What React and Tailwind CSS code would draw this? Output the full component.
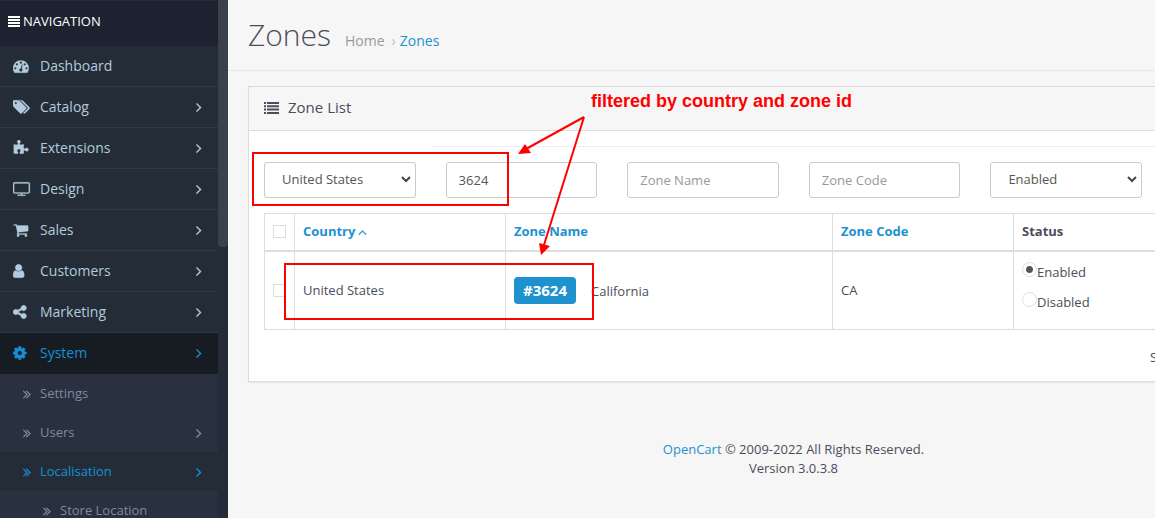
const ICONS = {
  dashboard: 'M384 1152q0-53-37.5-90.5t-90.5-37.5-90.5 37.5-37.5 90.5 37.5 90.5 90.5 37.5 90.5-37.5 37.5-90.5zm192-448q0-53-37.5-90.5t-90.5-37.5-90.5 37.5-37.5 90.5 37.5 90.5 90.5 37.5 90.5-37.5 37.5-90.5zm428 481l101-382q6-26-7.5-48.5t-38.5-29.5-48 6.5-30 39.5l-101 382q-60 5-107 43.5t-63 98.5q-20 77 20 146t117 89 146-20 89-117q16-60-6-117t-72-91zm660-33q0-53-37.5-90.5t-90.5-37.5-90.5 37.5-37.5 90.5 37.5 90.5 90.5 37.5 90.5-37.5 37.5-90.5zm-640-640q0-53-37.5-90.5t-90.5-37.5-90.5 37.5-37.5 90.5 37.5 90.5 90.5 37.5 90.5-37.5 37.5-90.5zm448 192q0-53-37.5-90.5t-90.5-37.5-90.5 37.5-37.5 90.5 37.5 90.5 90.5 37.5 90.5-37.5 37.5-90.5zm320 448q0 261-141 483-19 29-54 29h-1402q-35 0-54-29-141-221-141-483 0-182 71-348t191-286 286-191 348-71 348 71 286 191 191 286 71 348z',
  tags: 'M448 448q0-53-37.5-90.5t-90.5-37.5-90.5 37.5-37.5 90.5 37.5 90.5 90.5 37.5 90.5-37.5 37.5-90.5zm1067 576q0 53-37 90l-491 492q-39 37-91 37-53 0-90-37l-715-716q-38-37-64.5-101t-26.5-117v-416q0-52 38-90t90-38h416q53 0 117 26.5t102 64.5l715 714q37 39 37 91zm384 0q0 53-37 90l-491 492q-39 37-91 37-36 0-59-14t-53-45l470-470q37-37 37-90 0-52-37-91l-715-714q-38-38-102-64.5t-117-26.5h224q53 0 117 26.5t102 64.5l715 714q37 39 37 91z',
  puzzle: 'M1755 1082q0 81-44.5 135t-123.5 54q-41 0-77.5-17.5t-59-38-56.5-38-71-17.5q-110 0-110 124 0 39 16 115t15 115v5q-22 0-33 1-34 3-97.5 11.5t-115.5 13.5-98 5q-61 0-103-26.5t-42-83.5q0-37 17.5-71t38-56.5 38-59 17.5-77.5q0-79-54-123.5t-135-44.5q-84 0-143 45.5t-59 127.5q0 43 15 83t33.5 64.5 33.5 53 15 50.5q0 45-46 89-37 35-117 35-95 0-245-24-9-2-27.5-4t-27.5-4l-13-2q-1 0-3-1-2 0-2-1v-1024q2 1 17.5 3.5t34 5 21.5 3.5q150 24 245 24 80 0 117-35 46-44 46-89 0-22-15-50.5t-33.5-53-33.5-64.5-15-83q0-82 59-127.5t144-45.5q80 0 134 44.5t54 123.5q0 41-17.5 77.5t-38 59-38 56.5-17.5 71q0 57 42 83.5t103 26.5q64 0 180-15t163-17v2q-1 2-3.5 17.5t-5 34-3.5 21.5q-24 150-24 245 0 80 35 117 44 46 89 46 22 0 50.5-15t53-33.5 64.5-33.5 83-15q82 0 127.5 59t45.5 143z',
  tv: 'M1792 1248v-960q0-32-32-32h-1600q-32 0-32 32v960q0 32 32 32h1600q32 0 32-32zm128-960v960q0 66-47 113t-113 47h-736v128h352q32 0 32 32v64q0 32-32 32h-832q-32 0-32-32v-64q0-32 32-32h352v-128h-736q-66 0-113-47t-47-113v-960q0-66 47-113t113-47h1600q66 0 113 47t47 113z',
  cart: 'M704 1536q0 52-38 90t-90 38-90-38-38-90 38-90 90-38 90 38 38 90zm896 0q0 52-38 90t-90 38-90-38-38-90 38-90 90-38 90 38 38 90zm128-1088v512q0 24-16.5 42.5t-40.5 21.5l-1044 122q13 60 13 70 0 16-24 64h920q26 0 45 19t19 45-19 45-45 19h-1024q-26 0-45-19t-19-45q0-11 8-31.5t16-36 21.5-40 15.5-29.5l-177-823h-204q-26 0-45-19t-19-45 19-45 45-19h256q16 0 28.5 6.5t19.5 15.5 13 24.5 8 26 5.5 29.5 4.5 26h1201q26 0 45 19t19 45z',
  user: 'M1280 1399q0 109-62.5 187t-150.5 78h-854q-88 0-150.5-78t-62.5-187q0-85 8.5-160.5t31.5-152 58.5-131 94-89 134.5-34.5q131 128 313 128t313-128q76 0 134.5 34.5t94 89 58.5 131 31.5 152 8.5 160.5zm-256-887q0 159-112.5 271.5t-271.5 112.5-271.5-112.5-112.5-271.5 112.5-271.5 271.5-112.5 271.5 112.5 112.5 271.5z',
  share: 'M1216 1024q133 0 226.5 93.5t93.5 226.5-93.5 226.5-226.5 93.5-226.5-93.5-93.5-226.5q0-12 2-34l-360-180q-92 86-218 86-133 0-226.5-93.5t-93.5-226.5 93.5-226.5 226.5-93.5q126 0 218 86l360-180q-2-22-2-34 0-133 93.5-226.5t226.5-93.5 226.5 93.5 93.5 226.5-93.5 226.5-226.5 93.5q-126 0-218-86l-360 180q2 22 2 34t-2 34l360 180q92-86 218-86z',
  cog: 'M1024 896q0-106-75-181t-181-75-181 75-75 181 75 181 181 75 181-75 75-181zm512-109v222q0 12-8 23t-20 13l-185 28q-19 54-39 91 35 50 107 138 10 12 10 25t-9 23q-27 37-99 108t-94 71q-12 0-26-9l-138-108q-44 23-91 38-16 136-29 186-7 28-36 28h-222q-14 0-24.5-8.5t-11.5-21.5l-28-184q-49-16-90-37l-141 107q-10 9-25 9-14 0-25-11-126-114-165-168-7-10-7-23 0-12 8-23 15-21 51-66.5t54-70.5q-27-50-41-99l-183-27q-13-2-21-12.5t-8-23.5v-222q0-12 8-23t19-13l186-28q14-46 39-92-40-57-107-138-10-12-10-24 0-10 9-23 26-36 98.5-107.5t94.5-71.5q13 0 26 10l138 107q44-23 91-38 16-136 29-186 7-28 36-28h222q14 0 24.5 8.5t11.5 21.5l28 184q49 16 90 37l142-107q9-9 24-9 13 0 25 10 129 119 165 170 7 8 7 22 0 12-8 23-15 21-51 66.5t-54 70.5q26 50 41 98l183 28q13 2 21 12.5t8 23.5z',
  angleRight: 'M595 960q0 13-10 23l-466 466q-10 10-23 10t-23-10l-50-50q-10-10-10-23t10-23l393-393-393-393q-10-10-10-23t10-23l50-50q10-10 23-10t23 10l466 466q10 10 10 23z',
  doubleRight: 'M595 960q0 13-10 23l-466 466q-10 10-23 10t-23-10l-50-50q-10-10-10-23t10-23l393-393-393-393q-10-10-10-23t10-23l50-50q10-10 23-10t23 10l466 466q10 10 10 23zm384 0q0 13-10 23l-466 466q-10 10-23 10t-23-10l-50-50q-10-10-10-23t10-23l393-393-393-393q-10-10-10-23t10-23l50-50q10-10 23-10t23 10l466 466q10 10 10 23z',
  angleUp: 'M1075 1184q0 13-10 23l-50 50q-10 10-23 10t-23-10l-393-393-393 393q-10 10-23 10t-23-10l-50-50q-10-10-10-23t10-23l466-466q10-10 23-10t23 10l466 466q10 10 10 23z',
};

function Icon({ name, className }) {
  return (
    <svg viewBox="0 0 2048 1792" className={className} fill="currentColor" stroke="currentColor" strokeWidth="30" aria-hidden="true">
      <path d={ICONS[name]} />
    </svg>
  );
}

function BarsIcon() {
  return (
    <svg viewBox="0 0 12 11" className="h-[11px] w-3" fill="currentColor" aria-hidden="true">
      <path d="M0 0h12v2H0zM0 3h12v2H0zM0 6h12v2H0zM0 9h12v2H0z" />
    </svg>
  );
}

function ListIcon() {
  return (
    <svg viewBox="0 0 15 12" className="h-3 w-[15px]" fill="currentColor" aria-hidden="true">
      <path d="M0 0h2v2H0zM3 0h12v2H3zM0 3.3h2v2H0zM3 3.3h12v2H3zM0 6.6h2v2H0zM3 6.6h12v2H3zM0 10h2v2H0zM3 10h12v2H3z" />
    </svg>
  );
}

const MENU = [
  { label: 'Dashboard', icon: 'dashboard' },
  { label: 'Catalog', icon: 'tags', more: true },
  { label: 'Extensions', icon: 'puzzle', more: true },
  { label: 'Design', icon: 'tv', more: true },
  { label: 'Sales', icon: 'cart', more: true },
  { label: 'Customers', icon: 'user', more: true },
  { label: 'Marketing', icon: 'share', more: true },
  { label: 'System', icon: 'cog', more: true, active: true },
];

const SUBMENU = [
  { label: 'Settings' },
  { label: 'Users', more: true },
  { label: 'Localisation', more: true, active: true },
];

function Sidebar() {
  return (
    <aside className="flex w-[228px] shrink-0 items-start bg-[#242d37]">
      <nav aria-label="Navigation" className="w-[218px]">
        <div className="flex h-[46px] items-center gap-[3px] border-t border-[#242d37] bg-[#1c2230] pb-1 pl-2 text-[13px] text-white">
          <BarsIcon />
          NAVIGATION
        </div>
        <ul>
          {MENU.map((item) => (
            <li key={item.label}>
              <a
                href="#"
                className={`flex h-[41px] items-center border-b pr-1 pl-[13px] text-sm ${
                  item.active ? 'border-[#171b22] bg-[#171b22] text-[#1490d6]' : 'border-[#2c3b47] text-[#b2cbde]'
                }`}
              >
                <span className="w-[27px]">
                  <Icon name={item.icon} className="h-4 w-[18px]" />
                </span>
                <span className="flex-1">{item.label}</span>
                {item.more && <Icon name="angleRight" className="h-4 w-[18px]" />}
              </a>
            </li>
          ))}
        </ul>
        <ul className="bg-[#293040]">
          {SUBMENU.map((item) => (
            <li key={item.label}>
              <a
                href="#"
                className={`flex h-[39px] items-center pr-1 pl-[23px] text-[13px] ${
                  item.active ? 'bg-[#242d37] text-[#1490d6]' : 'text-[#808b9c]'
                }`}
              >
                <span className="w-[17px]">
                  <Icon name="doubleRight" className="h-[14px] w-4" />
                </span>
                <span className="flex-1">{item.label}</span>
                {item.more && <Icon name="angleRight" className="h-4 w-[18px]" />}
              </a>
            </li>
          ))}
          <li>
            <a href="#" className="flex h-[39px] items-center pl-[43px] text-[13px] text-[#808b9c]">
              <span className="w-[17px]">
                <Icon name="doubleRight" className="h-[14px] w-4" />
              </span>
              Store Location
            </a>
          </li>
        </ul>
      </nav>
      {/* Scrollbar thumb */}
      <div className="h-[247px] flex-1 rounded-b bg-[#3a414c]" />
    </aside>
  );
}

const FIELD = 'h-[36px] w-full rounded-[3px] border border-[#ccc] bg-white text-[13px] text-[#555]';

function Select({ label, value }) {
  return (
    <div className="relative">
      <select aria-label={label} defaultValue={value} className={`${FIELD} appearance-none pr-6 pl-[17px]`}>
        <option>{value}</option>
      </select>
      <svg viewBox="0 0 10 7" className="pointer-events-none absolute top-[14px] right-[5px] h-[7px] w-[10px]" fill="none" stroke="#444" strokeWidth="2">
        <path d="M1 1l4 4 4-4" />
      </svg>
    </div>
  );
}

function Radio({ label, checked }) {
  return (
    <label className="flex h-[30px] items-center">
      <input
        type="radio"
        name="status"
        defaultChecked={checked}
        className="mb-[5px] h-[15px] w-[15px] appearance-none rounded-full border border-[#ddd] bg-white bg-[radial-gradient(circle,#555_3px,transparent_4px)] not-checked:bg-none"
      />
      {label}
    </label>
  );
}

const CHECKBOX = 'block h-[13px] w-[13px] appearance-none border border-[#ddd] bg-white';
const CELL = 'border border-[#ddd] px-2 text-left last:border-r-0';
const HEAD = 'border border-b-2 border-[#ddd] px-2 text-left font-bold last:border-r-0';

function ZoneTable() {
  return (
    <table className="w-full table-fixed border-collapse">
      <colgroup>
        <col className="w-[30px]" />
        <col className="w-[211px]" />
        <col className="w-[327px]" />
        <col className="w-[181px]" />
        <col />
      </colgroup>
      <thead>
        <tr className="h-[37px] text-[#1e91cf]">
          <th className={HEAD}>
            <input type="checkbox" aria-label="Select all" className={CHECKBOX} />
          </th>
          <th className={HEAD}>
            <a href="#" className="flex items-center gap-[3px]">
              Country
              <Icon name="angleUp" className="h-[14px] w-4" />
            </a>
          </th>
          <th className={HEAD}><a href="#">Zone Name</a></th>
          <th className={HEAD}><a href="#">Zone Code</a></th>
          <th className={`${HEAD} text-[#4c4d5a]`}>Status</th>
        </tr>
      </thead>
      <tbody>
        <tr className="h-[79px]">
          <td className={CELL}>
            <input type="checkbox" aria-label="Select United States" className={CHECKBOX} />
          </td>
          <td className={CELL}>United States</td>
          <td className={CELL}>
            <span className="mr-[15px] inline-block rounded bg-[#1e91cf] px-[9px] text-[15px] leading-[27px] font-bold text-white">#3624</span>
            California
          </td>
          <td className={CELL}>CA</td>
          <td className={`${CELL} pb-[6px]`}>
            <Radio label="Enabled" checked />
            <Radio label="Disabled" />
          </td>
        </tr>
      </tbody>
    </table>
  );
}

/* Red boxes, arrows and caption laid over the page */
function Annotations() {
  return (
    <div className="pointer-events-none absolute inset-0">
      <div className="absolute top-[152px] left-[252px] h-[54px] w-[257px] border-2 border-[#f00]" />
      <div className="absolute top-[263px] left-[284px] h-[57px] w-[310px] border-2 border-[#f00]" />
      <svg viewBox="0 0 80 150" className="absolute top-[110px] left-[510px] h-[150px] w-[80px]" fill="#f00">
        <path d="M74 7L16 39M74 7L33 138" fill="none" stroke="#f00" strokeWidth="2" />
        <path d="M8 44l7-10 6 9zM31 145l-2-12 11 3z" />
      </svg>
      <p className="absolute top-[90px] left-[591px] font-['Liberation_Sans',Arial,sans-serif] text-[18px] leading-[22px] font-bold whitespace-nowrap text-[#f00]">
        filtered by country and zone id
      </p>
    </div>
  );
}

export default function App() {
  return (
    <div className="relative flex h-screen overflow-hidden bg-[#f6f6f6] font-['Open_Sans','Noto_Sans',sans-serif] text-[13px] text-[#4c4d5a]">
      <Sidebar />
      <main className="min-w-0 flex-1">
        <header className="flex h-[71px] items-baseline gap-[14px] border-b border-[#e7e7e7] pt-[14px] pl-5">
          <h1 className="text-[30px] leading-[42px] font-light">Zones</h1>
          <nav aria-label="Breadcrumb" className="flex items-baseline gap-1 text-sm">
            <a href="#" className="text-[#999]">Home</a>
            <span className="pl-[3px] text-[#bbb]">›</span>
            <a href="#" className="text-[#1e91cf]">Zones</a>
          </nav>
        </header>

        <section className="mt-[15px] ml-5 border border-r-0 border-[#dcdcdc] bg-white shadow-[0_1px_1px_rgba(0,0,0,0.05)]">
          <h2 className="flex h-[44px] items-center gap-[9px] border-b border-[#dcdcdc] bg-[#f6f6f6] pb-[2px] pl-[15px] text-[15px]">
            <ListIcon />
            Zone List
          </h2>
          <div className="pt-[15px] pl-[15px]">
            <div className="ml-[167px] border-t border-[#eee]" />
            <form className="mt-[15px] grid grid-cols-5 gap-[30px] pr-[13px]">
              <Select label="Country" value="United States" />
              <input aria-label="Zone ID" defaultValue="3624" className={`${FIELD} px-3`} />
              <input aria-label="Zone Name" placeholder="Zone Name" className={`${FIELD} px-3 placeholder:text-[#999]`} />
              <input aria-label="Zone Code" placeholder="Zone Code" className={`${FIELD} px-3 placeholder:text-[#999]`} />
              <Select label="Status" value="Enabled" />
            </form>
            <div className="mt-[15px]">
              <ZoneTable />
            </div>
            {/* Pager text starts at the edge and runs out of the window */}
            <p className="flex h-[51px] items-center justify-end pt-1">
              <span className="w-[5px]">S</span>
            </p>
          </div>
        </section>

        <footer className="pt-[58px] pr-1 pl-[208px] text-center leading-[19px]">
          <a href="#" className="text-[#1e91cf]">OpenCart</a> © 2009-2022 All Rights Reserved.
          <br />
          Version 3.0.3.8
        </footer>
      </main>
      <Annotations />
    </div>
  );
}
